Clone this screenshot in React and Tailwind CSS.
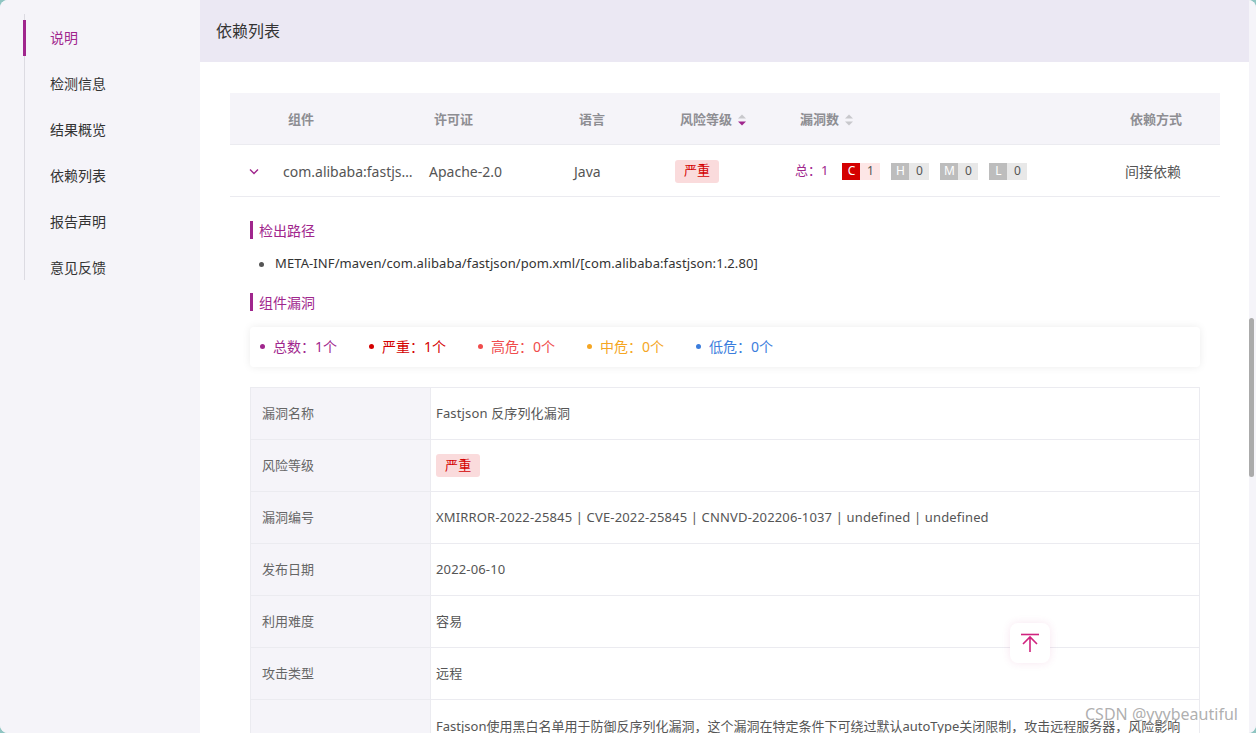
import React from 'react';

const NAV = ['说明', '检测信息', '结果概览', '依赖列表', '报告声明', '意见反馈'];

const COLS = 'grid grid-cols-[53px_146px_145px_101px_120px_330px_1fr]';

const STATS = [
  { label: '总数', value: '1个', color: 'text-[#a0268d]', dot: 'bg-[#a0268d]' },
  { label: '严重', value: '1个', color: 'text-[#d40000]', dot: 'bg-[#d40000]' },
  { label: '高危', value: '0个', color: 'text-[#f04c4c]', dot: 'bg-[#f04c4c]' },
  { label: '中危', value: '0个', color: 'text-[#f5a623]', dot: 'bg-[#f5a623]' },
  { label: '低危', value: '0个', color: 'text-[#3b7ddd]', dot: 'bg-[#3b7ddd]' },
];

const COUNTS = [
  { k: 'C', n: 1, key: 'bg-[#d40000]', cell: 'bg-[#fde6e6]' },
  { k: 'H', n: 0, key: 'bg-[#bdbdbd]', cell: 'bg-[#e8e8e8]' },
  { k: 'M', n: 0, key: 'bg-[#bdbdbd]', cell: 'bg-[#e8e8e8]' },
  { k: 'L', n: 0, key: 'bg-[#bdbdbd]', cell: 'bg-[#e8e8e8]' },
];

const DETAILS = [
  ['漏洞名称', 'Fastjson 反序列化漏洞'],
  ['风险等级', 'badge'],
  ['漏洞编号', 'XMIRROR-2022-25845 | CVE-2022-25845 | CNNVD-202206-1037 | undefined | undefined'],
  ['发布日期', '2022-06-10'],
  ['利用难度', '容易'],
  ['攻击类型', '远程'],
];

function SortIcon({ active }) {
  return (
    <svg width="10" height="14" viewBox="0 0 10 14" className="ml-[5px]">
      <path d="M1 5.5 L5 1.5 L9 5.5 Z" fill="#c8c8cc" />
      <path d="M1 8.5 L5 12.5 L9 8.5 Z" fill={active ? '#a0268d' : '#c8c8cc'} />
    </svg>
  );
}

function SevBadge() {
  return (
    <span className="inline-flex items-center h-[23px] px-[9px] rounded-[3px] bg-[#fadbdc] text-[#d40000] text-[13px]">
      严重
    </span>
  );
}

function SectionTitle({ children, className = '' }) {
  return (
    <div className={`flex items-center h-[18px] border-l-[3px] border-[#a0268d] pl-[6px] text-[14px] text-[#a0268d] ${className}`}>
      {children}
    </div>
  );
}

export default function App() {
  return (
    <div
      className="w-[1256px] h-[733px] bg-[#8fc5c2] overflow-hidden relative"
      style={{ fontFamily: '"Noto Sans", "Noto Sans CJK SC", sans-serif' }}
    >
      <div className="flex w-full h-full rounded-[8px] overflow-hidden bg-[#f5f4f9]">
        {/* Sidebar */}
        <aside className="w-[200px] shrink-0 bg-[#f5f4f9] pt-[20px]">
          <div className="ml-[24px] h-[266px] border-l border-[#dcdbe2]">
            <div className="-mt-[6px]">
              {NAV.map((item, i) => (
                <div
                  key={item}
                  className={`relative h-[46px] flex items-center pl-[25px] text-[14px] ${
                    i === 0 ? 'text-[#a0268d]' : 'text-[#333]'
                  }`}
                >
                  {i === 0 && <span className="absolute -left-[2px] top-[6px] w-[3px] h-[36px] bg-[#a0268d]" />}
                  {item}
                </div>
              ))}
            </div>
          </div>
        </aside>

        {/* Main */}
        <main className="w-[1049px] shrink-0 bg-white flex flex-col overflow-hidden">
          <header className="h-[62px] shrink-0 bg-[#ebe8f3] flex items-center pl-[16px] text-[16px] text-[#333]">
            依赖列表
          </header>

          <div className="pl-[30px] pr-[29px] pt-[31px]">
            {/* Table header */}
            <div className={`${COLS} h-[52px] items-center pt-[3px] bg-[#f5f4f9] border-b border-[#ebebf0] text-[13px] font-bold text-[#8e8e93]`}>
              <div />
              <div className="pl-[5px]">组件</div>
              <div className="pl-[5px]">许可证</div>
              <div className="pl-[5px]">语言</div>
              <div className="pl-[5px] flex items-center">风险等级<SortIcon active /></div>
              <div className="pl-[5px] flex items-center">漏洞数<SortIcon /></div>
              <div className="pl-[5px]">依赖方式</div>
            </div>

            {/* Row */}
            <div className={`${COLS} h-[52px] items-center pt-[1px] border-b border-[#ebebf0] text-[14px] text-[#555]`}>
              <div className="pl-[19px]">
                <svg width="10" height="7" viewBox="0 0 10 7">
                  <path d="M1 1.5 L5 5.5 L9 1.5" stroke="#a0268d" strokeWidth="1.4" fill="none" />
                </svg>
              </div>
              <div className="w-[134px] truncate">com.alibaba:fastjson</div>
              <div>Apache-2.0</div>
              <div>Java</div>
              <div><SevBadge /></div>
              <div className="flex items-center text-[13px]">
                <span className="text-[#a0268d] mr-[14px]">总：1</span>
                {COUNTS.map((c) => (
                  <span key={c.k} className="flex items-center h-[17px] mr-[11px] text-[12px]">
                    <span className={`w-[18px] h-full flex items-center justify-center text-white ${c.key}`}>{c.k}</span>
                    <span className={`w-[20px] h-full flex items-center justify-center text-[#555] ${c.cell}`}>{c.n}</span>
                  </span>
                ))}
              </div>
              <div>间接依赖</div>
            </div>

            {/* Expanded */}
            <div className="px-[20px]">
              <SectionTitle className="mt-[24px]">检出路径</SectionTitle>
              <ul className="mt-[15px] pl-[9px]">
                <li className="flex items-center h-[20px] text-[13px] tracking-[0.1px] text-[#333]">
                  <span className="w-[5px] h-[5px] rounded-full bg-[#555] mr-[11px]" />
                  META-INF/maven/com.alibaba/fastjson/pom.xml/[com.alibaba:fastjson:1.2.80]
                </li>
              </ul>

              <SectionTitle className="mt-[19px]">组件漏洞</SectionTitle>

              <div className="mt-[16px] h-[40px] rounded-[4px] bg-white shadow-[0_0_8px_rgba(0,0,0,0.08)] flex items-center pb-[1px] pl-[10px] text-[14px]">
                {STATS.map((s) => (
                  <div key={s.label} className={`w-[109px] flex items-center ${s.color}`}>
                    <span className={`w-[5px] h-[5px] rounded-full mr-[8px] ${s.dot}`} />
                    {s.label}：{s.value}
                  </div>
                ))}
              </div>

              {/* Detail table */}
              <div className="mt-[20px] border-t border-l border-r border-[#ebebf0] text-[13px] text-[#555]">
                {DETAILS.map(([k, v]) => (
                  <div key={k} className="flex h-[52px] border-b border-[#ebebf0]">
                    <div className="w-[180px] shrink-0 bg-[#f5f4f9] border-r border-[#ebebf0] flex items-center pl-[11px] text-[#666]">
                      {k}
                    </div>
                    <div className="flex-1 flex items-center pl-[5px] tracking-[0.15px]">
                      {v === 'badge' ? <SevBadge /> : v}
                    </div>
                  </div>
                ))}
                <div className="flex border-b border-[#ebebf0]">
                  <div className="w-[180px] shrink-0 bg-[#f5f4f9] border-r border-[#ebebf0] flex items-center pl-[11px] text-[#666]">
                    漏洞描述
                  </div>
                  <div className="flex-1 pl-[5px] pr-[8px] pt-[16px] pb-[16px] leading-[20px]">
                    Fastjson使用黑白名单用于防御反序列化漏洞，这个漏洞在特定条件下可绕过默认autoType关闭限制，攻击远程服务器，风险影响较大。建议Fastjson用户尽快采取安全措施保障系统安全。该漏洞影响1.2.80及之前所有版本，攻击者可利用该漏洞在目标服务器上执行任意代码。
                  </div>
                </div>
              </div>
            </div>
          </div>
        </main>

        {/* Scrollbar */}
        <div className="w-[7px] shrink-0 bg-[#f5f4f9] pt-[318px]">
          <div className="w-[5px] h-[159px] rounded-full bg-[#ababab]" />
        </div>
      </div>

      {/* Back to top */}
      <button className="absolute left-[1010px] top-[623px] w-[40px] h-[40px] rounded-[8px] bg-white shadow-[0_0_8px_rgba(200,50,130,0.12)] flex items-center justify-center">
        <svg width="20" height="20" viewBox="0 0 20 20">
          <path d="M1 1.5 H19" stroke="#d0237f" strokeWidth="1.6" />
          <path d="M10 4 V19 M3 11 L10 4 L17 11" stroke="#d0237f" strokeWidth="1.6" fill="none" />
        </svg>
      </button>

      {/* Watermark */}
      <div className="absolute left-[1085px] top-[702px] text-[16px] text-[#9a9a9a]/80 pointer-events-none">
        CSDN @yyybeautiful
      </div>
    </div>
  );
}
